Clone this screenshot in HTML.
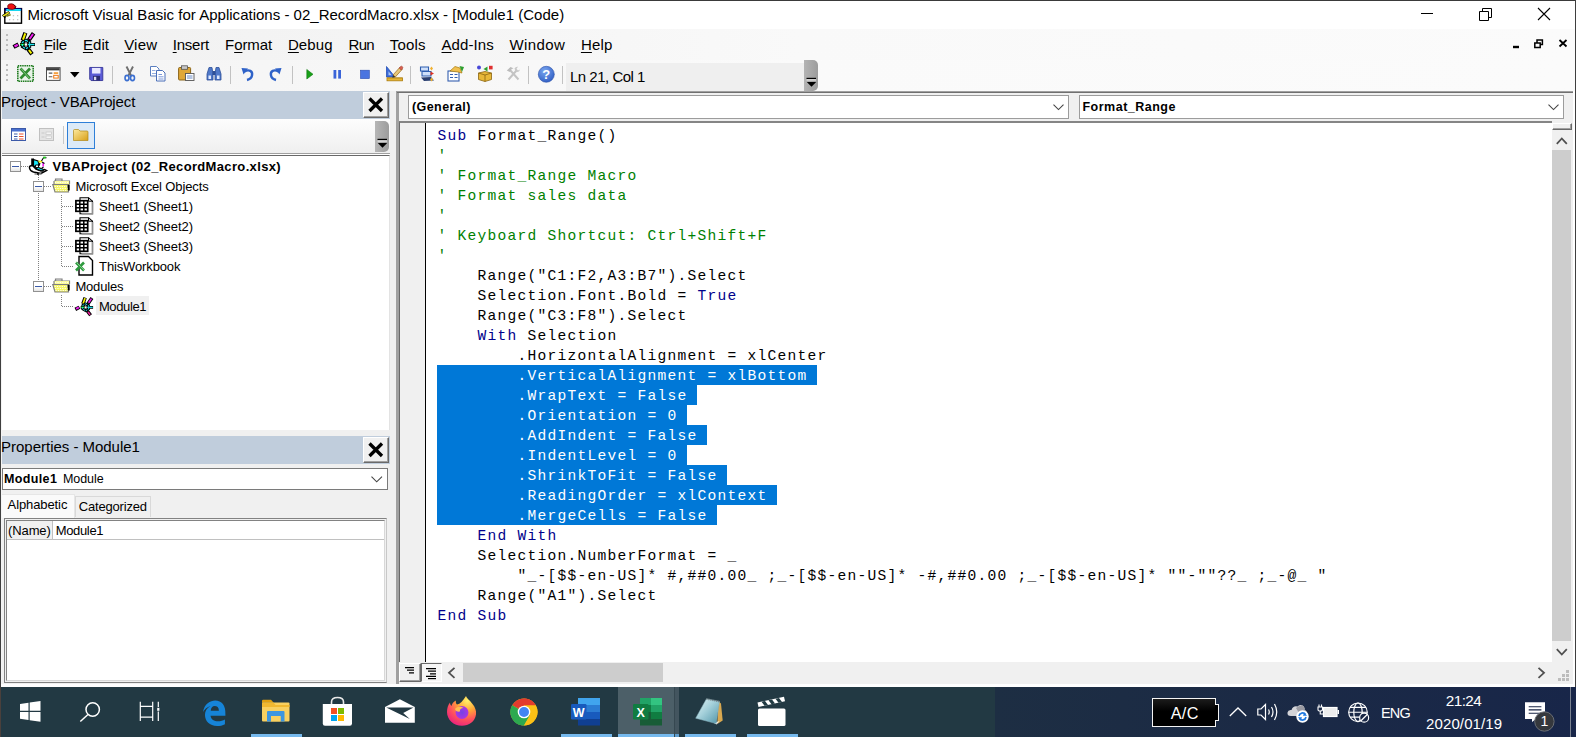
<!DOCTYPE html>
<html lang="en">
<head>
<meta charset="utf-8">
<title>Microsoft Visual Basic for Applications - 02_RecordMacro.xlsx - [Module1 (Code)]</title>
<style>
*{box-sizing:border-box;margin:0;padding:0}
html,body{width:1576px;height:737px;overflow:hidden;background:#f0f0f0;font-family:"Liberation Sans",sans-serif;color:#000}
.a{position:absolute}
.t{position:absolute;white-space:pre;line-height:1}
svg{position:absolute;overflow:visible}
u{text-decoration:underline;text-underline-offset:1.5px;text-decoration-thickness:1.2px}
#titlebar{left:0;top:0;width:1576px;height:29px;background:#fff;border-top:1px solid #3a3a3a;border-left:1px solid #3a3a3a;border-right:1px solid #3a3a3a}
#menubar{left:1px;top:29px;width:1574px;height:31px;background:linear-gradient(90deg,#eeeeee 0,#f2f2f2 160px,#f5f5f5 450px,#f9f9f9 800px,#fbfbfb 100%)}
#toolbar{left:1px;top:60px;width:1574px;height:31px;background:linear-gradient(90deg,#f4f4f4 0,#f7f7f7 400px,#fafafa 800px,#fbfbfb 100%)}
.edge{top:0;width:1px;height:687px;background:#3f3f3f}
.dots{width:2px;background-image:repeating-linear-gradient(#bcbcbc 0 2px,transparent 2px 5px)}
.sep{width:1px;height:18px;top:66px;background:#c2c2c2}
#dock{left:0;top:91px;width:392px;height:596px;background:#f0f0f0}
.phead{background:#c0cddc;left:2px;width:388px}
.xbtn{width:26px;height:26px;background:#f0f0f0;border:1px solid;border-color:#fff #6a6a6a #6a6a6a #fff;box-shadow:inset -1px -1px 0 #a0a0a0}
.white{background:#fff}
.b{font-weight:bold}
#code{font-family:"Liberation Mono",monospace;font-size:14.6px;letter-spacing:1.24px;line-height:20px;left:437.6px;top:126px;white-space:pre;color:#000}
#code .k{color:#00008b}
#code .c{color:#008000}
#code .w{color:#fff}
.sel{left:437px;height:20px;background:#0078d7}
#taskbar{left:0;top:687px;width:1576px;height:50px;background:linear-gradient(90deg,#223943 0,#223943 995px,#1d2e43 995px,#1b2a45 1250px,#182649 1576px)}
.ul{height:3px;top:734px;background:#76b9ed}
.tree{font-size:13px}
</style>
</head>
<body>
<!-- TITLE BAR -->
<div id="titlebar" class="a"></div>
<svg style="left:0;top:0" width="26" height="26" viewBox="0 0 26 26">
  <rect x="4.800" y="8.600" width="16.700" height="14.600" fill="#fff" stroke="#000" stroke-width="1.400"/>
  <rect x="4.800" y="8.200" width="16.700" height="2.600" fill="#00008c"/>
  <rect x="6.200" y="9" width="14.600" height="1.900" fill="#18e8f8"/>
  <path d="M4.800 11.500 V18" stroke="#000" stroke-width="1.400"/>
  <g fill="#c4c4c4"><rect x="12.800" y="15" width="1.300" height="1.300"/><rect x="17" y="15" width="1.300" height="1.300"/><rect x="9" y="19" width="1.300" height="1.300"/><rect x="12.800" y="19" width="1.300" height="1.300"/><rect x="17" y="19" width="1.300" height="1.300"/></g>
  <path d="M8.400 9 Q6.500 5 9.500 4 Q12 3.200 14 4.600 L15.800 6.400 L15.200 8.600 L12.500 9.400z" fill="#f01010" stroke="#500" stroke-width=".7"/>
  <path d="M13.800 5 L15.600 6.600 L14.600 8.400" fill="none" stroke="#400" stroke-width=".9"/>
  <path d="M2.300 15.300 L8.600 11.400 L9.800 13.200 L3.800 17z" fill="#f0e818" stroke="#000" stroke-width=".7"/>
  <path d="M6 15.200 L10.500 14 L10.800 15.400 L6.500 17z" fill="#808018"/>
</svg>
<span class="t" style="left:27.4px;top:7.1px;font-size:15.0px;letter-spacing:0.013px;">Microsoft Visual Basic for Applications - 02_RecordMacro.xlsx - [Module1 (Code)</span>]
<svg style="left:1415px;top:1px" width="150" height="28" viewBox="0 0 150 28" fill="none" stroke="#000" stroke-width="1">
  <path d="M6 12.5H18"/>
  <path d="M64.5 10.5h9v9h-9z M67.5 10.5v-3h9v9h-3" />
  <path d="M123 7 L135 19 M135 7 L123 19" stroke-width="1.1"/>
</svg>

<!-- MENU BAR -->
<div id="menubar" class="a"></div>
<div id="toolbar" class="a"></div>
<div class="a dots" style="left:6px;top:34px;height:19px"></div>
<svg style="left:12px;top:32px" width="24" height="23" viewBox="0 0 24 23">
<g fill="none" stroke-linecap="butt">
  <g stroke="#000" stroke-width="4.200"><path d="M13.400 .8L10.600 8.400 M21.600 1.200L17 7.900 M1.500 15L6.500 12.300 M16.300 17.200L20 22.200"/></g>
  <g stroke="#000" stroke-width="3.200"><path d="M8 12.500H23 M10.600 8L12.500 10.500 M17 7.600L15.500 10.500 M15 15L16.500 17.500"/><path d="M14 8.300 L17.600 10.400 V14.600 L14 16.700 L10.400 14.600 V10.400z"/></g>
  <path d="M13.300 1.400L11 7.600" stroke="#f4f400" stroke-width="2"/>
  <path d="M21 2L17.600 7" stroke="#f020f0" stroke-width="2"/>
  <path d="M2.500 14.500L5.800 12.700" stroke="#f020f0" stroke-width="2.400"/>
  <path d="M16.900 18L19.400 21.400" stroke="#f4f400" stroke-width="2"/>
  <path d="M8.500 12.500H12.500" stroke="#20e020" stroke-width="1.500"/>
  <path d="M16 12.500H22.500" stroke="#20e8f0" stroke-width="1.400"/>
  <path d="M14 8.300 L17.600 10.400 V14.600 L14 16.700 L10.400 14.600 V10.400z" stroke="#20e8f0" stroke-width="1.200" stroke-dasharray="2.200 1.200"/>
  <rect x="12.800" y="11.300" width="2.400" height="2.400" fill="#fff" stroke="none"/>
</g>
</svg>
<span class="t" style="left:43.7px;top:36.8px;font-size:15.0px;letter-spacing:-0.272px;"><u>F</u>ile</span>
<span class="t" style="left:82.9px;top:36.8px;font-size:15.0px;letter-spacing:0.085px;"><u>E</u>dit</span>
<span class="t" style="left:124.2px;top:36.8px;font-size:15.0px;letter-spacing:0.188px;"><u>V</u>iew</span>
<span class="t" style="left:172.7px;top:36.8px;font-size:15.0px;letter-spacing:-0.205px;"><u>I</u>nsert</span>
<span class="t" style="left:225.1px;top:36.8px;font-size:15.0px;letter-spacing:-0.103px;">F<u>o</u>rmat</span>
<span class="t" style="left:287.9px;top:36.8px;font-size:15.0px;letter-spacing:0.096px;"><u>D</u>ebug</span>
<span class="t" style="left:348.6px;top:36.8px;font-size:15.0px;letter-spacing:-0.710px;"><u>R</u>un</span>
<span class="t" style="left:389.7px;top:36.8px;font-size:15.0px;letter-spacing:0.214px;"><u>T</u>ools</span>
<span class="t" style="left:441.5px;top:36.8px;font-size:15.0px;letter-spacing:0.097px;"><u>A</u>dd-Ins</span>
<span class="t" style="left:509.5px;top:36.8px;font-size:15.0px;letter-spacing:0.388px;"><u>W</u>indow</span>
<span class="t" style="left:580.9px;top:36.8px;font-size:15.0px;letter-spacing:0.156px;"><u>H</u>elp</span>
<svg style="left:1508px;top:36px" width="64" height="16" viewBox="0 0 64 16" fill="none" stroke="#000">
  <path d="M5 11H11" stroke-width="2.4"/>
  <path d="M26.8 7h5.4v4.4h-5.4z M29 6.5v-2.5h5.4v4.4h-2" stroke-width="1.5"/>
  <path d="M51.500 4 L58.500 10.500 M58.500 4 L51.500 10.500" stroke-width="1.8"/>
</svg>

<!-- TOOLBAR -->
<div class="a dots" style="left:6px;top:64px;height:19px"></div>
<!-- excel -->
<svg style="left:17px;top:65px" width="17" height="17" viewBox="0 0 17 17">
  <rect x=".8" y=".8" width="15.400" height="15.400" fill="#e8f3e8" stroke="#1e7a1e" stroke-width="1.600" stroke-dasharray="1.500 .7"/>
  <path d="M3.500 3.500 L13 13.500 M13 3.500 L3.500 13.500" stroke="#2e8b2e" stroke-width="2.600"/>
  <path d="M4 3.500 L12.500 13.500" stroke="#8fcf8f" stroke-width=".8"/>
</svg>
<!-- userform -->
<svg style="left:46px;top:67px" width="14.500" height="14" viewBox="0 0 16 15">
  <rect x=".5" y=".5" width="15" height="14" fill="#fff" stroke="#3a3a3a"/>
  <rect x="1" y="1" width="14" height="2.500" fill="#3a3a3a"/>
  <path d="M3 6.500h4 M3 10.500h4" stroke="#555" stroke-width="1.200"/>
  <rect x="8.500" y="5.500" width="5" height="2" fill="#f5a040"/>
  <rect x="8.500" y="9" width="5" height="3" fill="none" stroke="#f08020" stroke-width="1.200"/>
</svg>

<svg style="left:70px;top:72px" width="10" height="6" viewBox="0 0 10 6"><path d="M0 0H9.500L4.750 5.500z" fill="#000"/></svg>
<!-- save -->
<svg style="left:89px;top:67px" width="14.500" height="14" viewBox="0 0 15 15">
  <path d="M.5 .5H14.500V14.500H2L.5 13z" fill="#5b5bd6" stroke="#38389a"/>
  <rect x="3" y="1" width="9" height="6" fill="#e8e8ff"/>
  <rect x="4" y="9.500" width="7.500" height="5" fill="#2a2a70"/>
  <rect x="5" y="10.500" width="2.500" height="3.500" fill="#d8d8f0"/>
</svg>
<div class="a sep" style="left:112px"></div>
<!-- cut -->
<svg style="left:124px;top:66px" width="12" height="16" viewBox="0 0 12 16">
  <path d="M2.500 .5 L7.300 10 M9 .5 L4.200 10" stroke="#707070" stroke-width="1.900" fill="none"/>
  <ellipse cx="3" cy="12" rx="2" ry="2.600" fill="none" stroke="#3b6fd0" stroke-width="1.600"/>
  <ellipse cx="8.500" cy="12" rx="2" ry="2.600" fill="none" stroke="#3b6fd0" stroke-width="1.600"/>
</svg>
<!-- copy -->
<svg style="left:150px;top:66px" width="16" height="16" viewBox="0 0 16 16">
  <path d="M.5 .5h6l2.500 2.500v7h-8.500z" fill="#fff" stroke="#5a7fc0"/>
  <path d="M2 4.500h3.500 M2 7.500h4" stroke="#7a9ad8" stroke-width=".8"/>
  <path d="M6.500 4.500h6l2.500 2.500v8h-8.500z" fill="#fff" stroke="#4a6fb8"/>
  <path d="M8.500 8.500h3.500 M8.500 10.800h5 M8.500 13h5" stroke="#5a7fd0" stroke-width=".8"/>
</svg>
<!-- paste -->
<svg style="left:178px;top:65px" width="17" height="17" viewBox="0 0 17 17">
  <rect x=".6" y="2.500" width="12" height="12.500" rx="1" fill="#e0a838" stroke="#8a6418"/>
  <rect x="3.500" y=".8" width="6" height="3.500" fill="#c8c8c8" stroke="#555" stroke-width=".8"/>
  <rect x="7.500" y="8.500" width="8.500" height="7" fill="#fff" stroke="#555" stroke-width=".9"/>
  <path d="M9 11h5.500 M9 13h5.500" stroke="#5a7fc0" stroke-width=".9"/>
</svg>
<!-- find -->
<svg style="left:206px;top:66px" width="16" height="15" viewBox="0 0 16 15">
  <path d="M1 8 L3 1.500 h3 l1 6.500 v6 h-6z M15 8 L13 1.500 h-3 l-1 6.500 v6 h6z" fill="#4f78c8" stroke="#2d4f98" stroke-width=".8"/>
  <rect x="6.500" y="5" width="3" height="4" fill="#2d4f98"/>
  <rect x="2.500" y="9.500" width="2.500" height="3.500" fill="#dfe9ff"/><rect x="11" y="9.500" width="2.500" height="3.500" fill="#dfe9ff"/>
</svg>
<div class="a sep" style="left:230px"></div>
<!-- undo / redo -->
<svg style="left:241px;top:66px" width="14" height="15" viewBox="0 0 14 15">
  <path d="M3.500 5.500 C8 3 12 5 11 9.500 C10.500 12 8 13.500 6 14" fill="none" stroke="#2f62c8" stroke-width="2.400"/>
  <path d="M.5 2 L7 2.500 L2.500 8.500z" fill="#2f62c8"/>
</svg>
<svg style="left:268px;top:66px" width="14" height="15" viewBox="0 0 14 15">
  <path d="M10.500 5.500 C6 3 2 5 3 9.500 C3.500 12 6 13.500 8 14" fill="none" stroke="#2f62c8" stroke-width="2.400"/>
  <path d="M13.500 2 L7 2.500 L11.500 8.500z" fill="#2f62c8"/>
</svg>
<div class="a sep" style="left:292px"></div>
<!-- run pause stop -->
<svg style="left:306px;top:69px" width="8" height="11" viewBox="0 0 8 11"><path d="M.8 .5V10L7 5.250z" fill="#18a018" stroke="#0d7a0d" stroke-width=".6"/></svg>
<svg style="left:333px;top:70px" width="9" height="9" viewBox="0 0 9 9"><rect x=".5" y="0" width="2.800" height="8.600" fill="#3a64d8"/><rect x="5.200" y="0" width="2.800" height="8.600" fill="#3a64d8"/></svg>
<svg style="left:360px;top:70px" width="10" height="9" viewBox="0 0 10 9"><rect x=".5" y=".2" width="8.800" height="8.400" fill="#4a74e0" stroke="#2a4cb0" stroke-width=".6"/></svg>
<!-- design mode -->
<svg style="left:385px;top:65px" width="18" height="17" viewBox="0 0 18 17">
  <path d="M1.500 12 L1.500 1.500 L10 12z" fill="#3a6ad8" stroke="#2450b8" stroke-width=".8"/>
  <path d="M3.500 10.300 L3.500 6.300 L6.800 10.300z" fill="#a8c4f4"/>
  <rect x="2" y="12.800" width="15.500" height="3" fill="#f0c040" stroke="#a87808" stroke-width=".8"/>
  <path d="M4 13v1.500 M6 13v1.500 M8 13v1.500 M10 13v1.500 M12 13v1.500 M14 13v1.500 M16 13v1.500" stroke="#a87808" stroke-width=".6"/>
  <path d="M8 10 L15 2.200 L17.300 4.200 L10.300 12z" fill="#e8c878" stroke="#a07028" stroke-width=".8"/>
  <path d="M14.200 3.100 L15.600 1.500 Q16.500 .8 17.400 1.700 Q18.200 2.600 17.500 3.500 L16.200 5z" fill="#d86050" stroke="#a03828" stroke-width=".6"/>
  <path d="M8 10 L7.300 12.800 L10.300 12z" fill="#333"/>
</svg>
<div class="a sep" style="left:410px"></div>
<!-- project explorer -->
<svg style="left:419px;top:65px" width="18" height="18" viewBox="0 0 18 18">
  <path d="M1.500 2 h8 v4 h-8z M3 6.500 h9 v4.500 h-9z" fill="#cfe0fa" stroke="#2f5fb0" stroke-width="1.100"/>
  <path d="M2 12.500 L12 12 L15 15.500 L5 16z" fill="#2a3f70"/>
  <path d="M12.500 1.500 l1.500 2 l-1.500 2 l-1.500 -2z M12.500 12.500 l1.500 2 l-1.500 2 l-1.500 -2z" fill="#f0b030"/>
  <path d="M11.500 6.500 l3.500 2 l-3.500 2z" fill="#e03020"/>
</svg>
<!-- properties -->
<svg style="left:447px;top:65px" width="18" height="17" viewBox="0 0 18 17">
  <rect x="1" y="6" width="11" height="10" fill="#fff" stroke="#3560b0" stroke-width="1.100"/>
  <path d="M3 9.500h3 M3 12.500h3 M7.500 9.500h3 M7.500 12.500h3" stroke="#3560b0" stroke-width="1.100"/>
  <path d="M3 6 L8 1.500 L13 3 L15 8 L11 7z" fill="#f0c050" stroke="#a87808" stroke-width=".7"/>
  <path d="M12.500 1 L17 2 L15 7z" fill="#30a030"/>
</svg>
<!-- object browser -->
<svg style="left:476px;top:65px" width="18" height="17" viewBox="0 0 18 17">
  <path d="M2.500 8 L9 6.500 L15.500 8 L15.500 14.500 L9 16.500 L2.500 14.500z" fill="#e8b838" stroke="#8a6410" stroke-width=".8"/>
  <path d="M2.500 8 L9 10 L15.500 8 M9 10V16.500" stroke="#8a6410" stroke-width=".8" fill="none"/>
  <circle cx="3" cy="2.500" r="2" fill="#4848d8"/>
  <path d="M7.500 4 l4 -2.500 v5z" fill="#30a030"/>
  <rect x="13" y=".8" width="3.600" height="3.600" fill="#e03030"/>
</svg>
<!-- toolbox disabled -->
<svg style="left:506px;top:66px" width="15" height="15" viewBox="0 0 15 15">
  <path d="M4 4 L12.500 13.500 M10.500 4.500 L2.500 13.500" stroke="#c4c4c4" stroke-width="2" fill="none"/>
  <path d="M.8 4.500 L4.500 1 L7.500 2.200 L5.500 3.200 L3.800 6z" fill="#bcbcbc"/>
  <path d="M8.500 2.500 Q9.500 .5 12 .8 L10.500 2.800 L12 4.500 L14 3.500 Q13.500 6 11 6 Q9 5.500 8.500 2.500z" fill="#c8c8c8"/>
</svg>
<div class="a sep" style="left:528px"></div>
<!-- help -->
<svg style="left:538px;top:66px" width="17" height="17" viewBox="0 0 17 17">
  <defs><radialGradient id="hg" cx=".4" cy=".3" r=".8"><stop offset="0" stop-color="#7aa6f0"/><stop offset="1" stop-color="#2a58c0"/></radialGradient></defs>
  <circle cx="8.300" cy="8.300" r="8" fill="url(#hg)" stroke="#2a50a8" stroke-width=".6"/>
  <text x="8.300" y="13" font-family="Liberation Sans, sans-serif" font-size="13" font-weight="bold" fill="#fff" text-anchor="middle">?</text>
</svg>
<div class="a sep" style="left:562px"></div>
<div class="a" style="left:566px;top:63px;width:238px;height:28px;background:#efefef"></div>
<div class="a" style="left:804px;top:60px;width:14px;height:31px;background:linear-gradient(90deg,#b4b4b4,#9c9c9c);border-radius:0 5px 5px 0"></div>
<svg style="left:806px;top:77px" width="11" height="11" viewBox="0 0 11 11"><path d="M.5 1.500H10" stroke="#000" stroke-width="1.400"/><path d="M.5 1.500H10" stroke="#fff" stroke-width="1" transform="translate(0,1.400)"/><path d="M.8 5H10.200L5.500 9.800z" fill="#000"/></svg>
<span class="t" style="left:570.0px;top:69.2px;font-size:15.0px;letter-spacing:-0.499px;">Ln 21, Col 1</span>

<!-- LEFT DOCK: PROJECT EXPLORER -->
<div id="dock" class="a"></div>
<div class="a" style="left:0;top:91px;width:1px;height:596px;background:#4f4f4f"></div>
<div class="a" style="left:1px;top:91px;width:1px;height:596px;background:#f4f4f4"></div>
<div class="a phead" style="top:91px;height:28px"></div>
<span class="t" style="left:1.0px;top:94.2px;font-size:15.0px;letter-spacing:-0.126px;">Project - VBAProject</span>
<div class="a xbtn" style="left:363px;top:92px"></div>
<svg style="left:368px;top:97px" width="16" height="16" viewBox="0 0 16 16"><path d="M1.500 1.500 L14 14 M14 1.500 L1.500 14" stroke="#000" stroke-width="3.300"/></svg>
<!-- project toolbar -->
<div class="a" style="left:2px;top:119px;width:388px;height:34px;background:linear-gradient(#fdfdfd,#efefef)"></div>
<svg style="left:11px;top:128px" width="16" height="14" viewBox="0 0 16 14">
  <rect x=".5" y=".5" width="14" height="12" fill="#fff" stroke="#3c5aa8"/>
  <rect x="1" y="1" width="13" height="2.500" fill="#4a70d0"/>
  <path d="M3 6h3.500 M3 8.500h3.500 M3 11h3.500" stroke="#3c5aa8" stroke-width="1"/>
  <path d="M8 6h4.500 M8 8.500h4.500 M8 11h4.500" stroke="#e85030" stroke-width="1.200"/>
</svg>
<svg style="left:39px;top:128px" width="16" height="14" viewBox="0 0 16 14">
  <rect x=".5" y=".5" width="14" height="12" fill="#e4e4e4" stroke="#c0c0c0"/>
  <rect x="7" y="4" width="5.500" height="2.500" fill="#f4f4f4" stroke="#c8c8c8" stroke-width=".7"/>
  <rect x="7" y="8" width="5.500" height="2.500" fill="#f4f4f4" stroke="#c8c8c8" stroke-width=".7"/>
  <path d="M2.500 5h3 M2.500 9h3" stroke="#c8c8c8" stroke-width="1"/>
</svg>
<div class="a" style="left:63px;top:126px;width:1px;height:18px;background:#c8c8c8"></div>
<div class="a" style="left:67px;top:122px;width:28px;height:27px;background:#dceaf8;border:1px solid #2e7fd8"></div>
<svg style="left:73px;top:129px" width="16" height="13" viewBox="0 0 16 13">
  <defs><linearGradient id="fg" x1="0" y1="0" x2="1" y2="1"><stop offset="0" stop-color="#fdeaa0"/><stop offset="1" stop-color="#d8a018"/></linearGradient></defs>
  <path d="M.5 1.500 Q.5 .5 1.500 .5 H5.500 L7 2 H14 Q15 2 15 3 V11.500 H.5z" fill="url(#fg)" stroke="#b08818" stroke-width=".7"/>
</svg>
<div class="a" style="left:375px;top:121px;width:14px;height:31px;background:linear-gradient(90deg,#b6b6b6,#9c9c9c);border-radius:0 5px 5px 0"></div>
<svg style="left:377px;top:138px" width="11" height="11" viewBox="0 0 11 11"><path d="M.5 1.500H10" stroke="#000" stroke-width="1.400"/><path d="M.5 3H10" stroke="#fff" stroke-width="1"/><path d="M.8 5H10.200L5.500 9.800z" fill="#000"/></svg>
<!-- tree box -->
<div class="a" style="left:2px;top:153px;width:388px;height:1px;background:#a0a0a0"></div>
<div class="a" style="left:2px;top:154px;width:388px;height:1px;background:#fff"></div>
<div class="a white" style="left:2px;top:155px;width:388px;height:275px;border-top:1px solid #696969;border-right:1px solid #e3e3e3"></div>
<!-- dotted connector lines -->
<svg style="left:0;top:156px" width="200" height="170" viewBox="0 0 200 170" shape-rendering="crispEdges" stroke="#808080" stroke-width="1" stroke-dasharray="1 1" fill="none">
  <path d="M21 10.500H28 M38.500 19V130 M44 30.500H52 M44 130.500H52 M61.500 39V110 M61.500 50.500H74 M61.500 70.500H74 M61.500 90.500H74 M61.500 110.500H74 M61.500 139V150 M61.500 150.500H74"/>
</svg>
<!-- expander boxes -->
<div class="a" style="left:10px;top:161px;width:11px;height:11px;border:1px solid #919191;background:linear-gradient(#fff 50%,#e4e4e4)"></div>
<div class="a" style="left:12px;top:166px;width:7px;height:1px;background:#3a5aa8"></div>
<div class="a" style="left:33px;top:181px;width:11px;height:11px;border:1px solid #919191;background:linear-gradient(#fff 50%,#e4e4e4)"></div>
<div class="a" style="left:35px;top:186px;width:7px;height:1px;background:#3a5aa8"></div>
<div class="a" style="left:33px;top:281px;width:11px;height:11px;border:1px solid #919191;background:linear-gradient(#fff 50%,#e4e4e4)"></div>
<div class="a" style="left:35px;top:286px;width:7px;height:1px;background:#3a5aa8"></div>
<!-- project icon -->
<svg style="left:28px;top:156px" width="20" height="19" viewBox="0 0 20 19">
  <path d="M1.500 12 q-.5 -2.500 3 -2.500 L8 13 l5 2 l3.500 -1.500 l2 1 l-5.500 3 l-7.500 -1.500 q-3.500 -1 -4 -4z" fill="#fff" stroke="#000" stroke-width="1.500"/>
  <path d="M3.200 2.500 h2.800 v7.500 h-2.800z" fill="#000"/>
  <path d="M5.500 3.500 l4.500 1.500 l1 3 l-1.500 3 l3.500 1.500 l2.500 1 l-1 1.500 l-5 -1.500 l-4 -4z" fill="#18e8f8" stroke="#000" stroke-width="1.200"/>
  <path d="M7.500 9 h3 v2.500 h-3z" fill="#fff" stroke="#000" stroke-width=".9"/>
  <path d="M10.500 5.500 h3.500" stroke="#f0f000" stroke-width="1.800"/>
  <path d="M15.200 7 v3.500" stroke="#f020f0" stroke-width="1.700"/>
  <path d="M13.500 5 L15.500 1.800 h3 M14 6 l2.500 1.500 M12 7 l-1 3 M15.500 11 l-2 1.500" stroke="#000" stroke-width="1.100" fill="none"/>
  <rect x="15.200" y=".6" width="2.600" height="1.800" fill="#20d020"/>
  <rect x="6.500" y="17.200" width="7" height="1.500" fill="#808080"/><rect x="9" y="17.200" width="2" height="1.500" fill="#000"/>
</svg>
<!-- folder icons -->
<svg style="left:52px;top:178px" width="19" height="15" viewBox="0 0 19 15">
  <path d="M3.500 3 V1 H10 V3" fill="#e8e8e8" stroke="#808080" stroke-width="1.200"/>
  <path d="M2 3 H17.500 V6" fill="none" stroke="#808080" stroke-width="1.200"/>
  <path d="M2 3 H17 V7 H2z" fill="#fbfb9a"/>
  <path d="M.8 6.500 H15.500 L16.500 14 H3z" fill="#f6f664" stroke="#808080" stroke-width="1.200"/>
  <path d="M3 4.500h13 M2.500 8.500h12.500 M3 10.500h12.500 M3.500 12.500h12.500" stroke="#fff" stroke-width=".9" stroke-dasharray="1.200 1.200"/>
  <path d="M16.800 6.500 V12.500" stroke="#000" stroke-width="1.800"/>
  <path d="M2 3 V6.500" stroke="#808080" stroke-width="1.200"/>
</svg>
<svg style="left:52px;top:278px" width="19" height="15" viewBox="0 0 19 15">
  <path d="M3.500 3 V1 H10 V3" fill="#e8e8e8" stroke="#808080" stroke-width="1.200"/>
  <path d="M2 3 H17.500 V6" fill="none" stroke="#808080" stroke-width="1.200"/>
  <path d="M2 3 H17 V7 H2z" fill="#fbfb9a"/>
  <path d="M.8 6.500 H15.500 L16.500 14 H3z" fill="#f6f664" stroke="#808080" stroke-width="1.200"/>
  <path d="M3 4.500h13 M2.500 8.500h12.500 M3 10.500h12.500 M3.500 12.500h12.500" stroke="#fff" stroke-width=".9" stroke-dasharray="1.200 1.200"/>
  <path d="M16.800 6.500 V12.500" stroke="#000" stroke-width="1.800"/>
  <path d="M2 3 V6.500" stroke="#808080" stroke-width="1.200"/>
</svg>
<!-- sheet icons -->
<svg style="left:75px;top:197px" width="19" height="18" viewBox="0 0 19 18">
  <path d="M5 .7 h8.500 l4 3.500 v12.500 h-12.500z" fill="#fff" stroke="#000" stroke-width="1.100"/>
  <path d="M13.500 .7 v3.500 h4" fill="none" stroke="#000" stroke-width="1"/>
  <path d="M17.500 5 v11.700 h-11" fill="none" stroke="#909090" stroke-width="1.600"/>
  <rect x=".9" y="3.700" width="11.800" height="10.600" fill="#fff" stroke="#000" stroke-width="1.700"/>
  <path d="M1 7.200h11.800 M1 10.700h11.800 M4.800 3.700v10.600 M8.800 3.700v10.600" stroke="#000" stroke-width="1.500"/>
</svg>
<svg style="left:75px;top:217px" width="19" height="18" viewBox="0 0 19 18">
  <path d="M5 .7 h8.500 l4 3.500 v12.500 h-12.500z" fill="#fff" stroke="#000" stroke-width="1.100"/>
  <path d="M13.500 .7 v3.500 h4" fill="none" stroke="#000" stroke-width="1"/>
  <path d="M17.500 5 v11.700 h-11" fill="none" stroke="#909090" stroke-width="1.600"/>
  <rect x=".9" y="3.700" width="11.800" height="10.600" fill="#fff" stroke="#000" stroke-width="1.700"/>
  <path d="M1 7.200h11.800 M1 10.700h11.800 M4.800 3.700v10.600 M8.800 3.700v10.600" stroke="#000" stroke-width="1.500"/>
</svg>
<svg style="left:75px;top:237px" width="19" height="18" viewBox="0 0 19 18">
  <path d="M5 .7 h8.500 l4 3.500 v12.500 h-12.500z" fill="#fff" stroke="#000" stroke-width="1.100"/>
  <path d="M13.500 .7 v3.500 h4" fill="none" stroke="#000" stroke-width="1"/>
  <path d="M17.500 5 v11.700 h-11" fill="none" stroke="#909090" stroke-width="1.600"/>
  <rect x=".9" y="3.700" width="11.800" height="10.600" fill="#fff" stroke="#000" stroke-width="1.700"/>
  <path d="M1 7.200h11.800 M1 10.700h11.800 M4.800 3.700v10.600 M8.800 3.700v10.600" stroke="#000" stroke-width="1.500"/>
</svg>
<!-- thisworkbook icon -->
<svg style="left:75px;top:258px" width="18" height="17" viewBox="0 0 18 17">
  <path d="M4 -1.500 h9.500 l4 4 v14.500 h-13.500z" fill="#fff" stroke="#000" stroke-width="1.400"/>
  <path d="M1 4.500 L9 12.500 M9 4.500 L1 12.500" stroke="#2e9a3e" stroke-width="2.600"/>
  <path d="M1.500 4.500 L9 12" stroke="#a0e0a8" stroke-width=".7"/>
</svg>
<!-- module icon -->
<svg style="left:74px;top:297px" width="20" height="19" viewBox="0 0 24 23">
<g fill="none" stroke-linecap="butt">
  <g stroke="#000" stroke-width="4.200"><path d="M13.400 .8L10.600 8.400 M21.600 1.200L17 7.900 M1.500 15L6.500 12.300 M16.300 17.200L20 22.200"/></g>
  <g stroke="#000" stroke-width="3.200"><path d="M8 12.500H23 M10.600 8L12.500 10.500 M17 7.600L15.500 10.500 M15 15L16.500 17.500"/><path d="M14 8.300 L17.600 10.400 V14.600 L14 16.700 L10.400 14.600 V10.400z"/></g>
  <path d="M13.300 1.400L11 7.600" stroke="#f4f400" stroke-width="2"/>
  <path d="M21 2L17.600 7" stroke="#f020f0" stroke-width="2"/>
  <path d="M2.500 14.500L5.800 12.700" stroke="#f020f0" stroke-width="2.400"/>
  <path d="M16.900 18L19.400 21.400" stroke="#f020a0" stroke-width="2"/>
  <path d="M8.500 12.500H12.500" stroke="#20e020" stroke-width="1.500"/>
  <path d="M16 12.500H22.500" stroke="#20e8f0" stroke-width="1.400"/>
  <path d="M14 8.300 L17.600 10.400 V14.600 L14 16.700 L10.400 14.600 V10.400z" stroke="#20e8f0" stroke-width="1.200" stroke-dasharray="2.200 1.200"/>
  <rect x="12.800" y="11.300" width="2.400" height="2.400" fill="#fff" stroke="none"/>
</g>
</svg>
<!-- tree labels -->
<span class="t" style="left:52.4px;top:159.6px;font-size:13.0px;letter-spacing:0.347px;font-weight:bold">VBAProject (02_RecordMacro.xlsx)</span>
<span class="t" style="left:75.6px;top:179.5px;font-size:13.0px;letter-spacing:-0.123px;">Microsoft Excel Objects</span>
<span class="t" style="left:99.1px;top:199.5px;font-size:13.0px;letter-spacing:-0.052px;">Sheet1 (Sheet1)</span>
<span class="t" style="left:99.1px;top:219.5px;font-size:13.0px;letter-spacing:-0.052px;">Sheet2 (Sheet2)</span>
<span class="t" style="left:99.1px;top:239.5px;font-size:13.0px;letter-spacing:-0.052px;">Sheet3 (Sheet3)</span>
<span class="t" style="left:99.1px;top:259.5px;font-size:13.0px;letter-spacing:-0.137px;">ThisWorkbook</span>
<span class="t" style="left:75.4px;top:279.5px;font-size:13.0px;letter-spacing:-0.177px;">Modules</span>
<div class="a" style="left:96px;top:296px;width:53px;height:19px;background:#f0f0f0"></div>
<span class="t" style="left:98.9px;top:299.5px;font-size:13.0px;letter-spacing:-0.382px;">Module1</span>

<!-- PROPERTIES -->
<div class="a phead" style="top:436px;height:28px"></div>
<span class="t" style="left:1.1px;top:439.2px;font-size:15.0px;letter-spacing:-0.022px;">Properties - Module1</span>
<div class="a xbtn" style="left:363px;top:437px"></div>
<svg style="left:368px;top:442px" width="16" height="16" viewBox="0 0 16 16"><path d="M1.500 1.500 L14 14 M14 1.500 L1.500 14" stroke="#000" stroke-width="3.300"/></svg>
<div class="a white" style="left:2px;top:468px;width:386px;height:22px;border:1px solid #7a7a7a"></div>
<span class="t" style="left:4.1px;top:473.0px;font-size:12.5px;letter-spacing:0.342px;font-weight:bold">Module1</span>
<span class="t" style="left:63.0px;top:473.0px;font-size:12.5px;letter-spacing:-0.067px;">Module</span>
<svg style="left:371px;top:476px" width="12" height="7" viewBox="0 0 12 7"><path d="M.5 .7 L5.700 5.800 L11 .7" fill="none" stroke="#444" stroke-width="1.100"/></svg>
<!-- tabs -->
<div class="a" style="left:75px;top:496px;width:76px;height:21px;background:#f0f0f0;border:1px solid #d9d9d9;border-bottom:none"></div>
<div class="a" style="left:2px;top:494px;width:73px;height:24px;background:#fafafa;border:1px solid #e6e6e6;border-bottom:none;border-left:none"></div>
<span class="t" style="left:7.6px;top:497.9px;font-size:13.0px;letter-spacing:-0.102px;">Alphabetic</span>
<span class="t" style="left:78.8px;top:499.8px;font-size:13.0px;letter-spacing:-0.192px;">Categorized</span>
<!-- grid -->
<div class="a" style="left:4px;top:518px;width:383px;height:165px;border:1px solid #828282;border-right-color:#c8c8c8;background:#f0f0f0"></div>
<div class="a white" style="left:6px;top:520px;width:379px;height:161px;border:1px solid #828282;border-right-color:#d8d8d8;border-bottom-color:#d8d8d8"></div>
<div class="a" style="left:7px;top:521px;width:46px;height:18px;background:#f0f0f0;border-right:1px solid #c0c0c0"></div>
<div class="a" style="left:7px;top:539px;width:377px;height:1px;background:#c0c0c0"></div>
<span class="t" style="left:8.0px;top:524.3px;font-size:13.0px;letter-spacing:-0.107px;">(Name)</span>
<span class="t" style="left:55.7px;top:524.3px;font-size:13.0px;letter-spacing:-0.339px;">Module1</span>

<!-- CODE WINDOW -->
<div class="a" style="left:392px;top:91px;width:5px;height:596px;background:#f0f0f0"></div>
<div class="a" style="left:396px;top:91px;width:1180px;height:593px;background:#f0f0f0;border-left:3px solid #a0a0a0;border-top:2px solid #a0a0a0;border-right:1px solid #a0a0a0"></div>
<div class="a" style="left:397px;top:92px;width:1176px;height:1px;background:#707070"></div>
<div class="a" style="left:1px;top:684px;width:1574px;height:3px;background:#fff"></div>
<div class="a" style="left:1573px;top:91px;width:2px;height:596px;background:#fff"></div>
<!-- combos -->
<div class="a white" style="left:408px;top:95px;width:661px;height:24px;border:1px solid #9c9c9c"></div>
<div class="a white" style="left:1079px;top:95px;width:485px;height:24px;border:1px solid #9c9c9c"></div>
<span class="t" style="left:411.9px;top:101.2px;font-size:12.5px;letter-spacing:0.457px;font-weight:bold">(General)</span>
<span class="t" style="left:1082.5px;top:101.2px;font-size:12.5px;letter-spacing:0.489px;font-weight:bold">Format_Range</span>
<svg style="left:1053px;top:104px" width="12" height="7" viewBox="0 0 12 7"><path d="M.5 .7 L5.500 5.600 L10.500 .7" fill="none" stroke="#444" stroke-width="1.100"/></svg>
<svg style="left:1548px;top:104px" width="12" height="7" viewBox="0 0 12 7"><path d="M.5 .7 L5.500 5.600 L10.500 .7" fill="none" stroke="#444" stroke-width="1.100"/></svg>
<!-- edit area -->
<div class="a white" style="left:399px;top:121px;width:1153px;height:541px;border-top:2px solid #858585;border-left:1px solid #696969"></div>
<div class="a" style="left:400px;top:123px;width:26px;height:539px;background:#f0f0f0;border-right:1px solid #000"></div>
<div class="a sel" style="top:365px;width:380px"></div>
<div class="a sel" style="top:385px;width:260px"></div>
<div class="a sel" style="top:405px;width:250px"></div>
<div class="a sel" style="top:425px;width:270px"></div>
<div class="a sel" style="top:445px;width:250px"></div>
<div class="a sel" style="top:465px;width:290px"></div>
<div class="a sel" style="top:485px;width:340px"></div>
<div class="a sel" style="top:505px;width:280px"></div>
<div id="code" class="a"><span class="k">Sub</span> Format_Range()
<span class="c">'</span>
<span class="c">' Format_Range Macro</span>
<span class="c">' Format sales data</span>
<span class="c">'</span>
<span class="c">' Keyboard Shortcut: Ctrl+Shift+F</span>
<span class="c">'</span>
    Range("C1:F2,A3:B7").Select
    Selection.Font.Bold = <span class="k">True</span>
    Range("C3:F8").Select
    <span class="k">With</span> Selection
        .HorizontalAlignment = xlCenter
<span class="w">        .VerticalAlignment = xlBottom </span>
<span class="w">        .WrapText = False </span>
<span class="w">        .Orientation = 0 </span>
<span class="w">        .AddIndent = False </span>
<span class="w">        .IndentLevel = 0 </span>
<span class="w">        .ShrinkToFit = False </span>
<span class="w">        .ReadingOrder = xlContext </span>
<span class="w">        .MergeCells = False </span>
    <span class="k">End With</span>
    Selection.NumberFormat = _
        "_-[$$-en-US]* #,##0.00_ ;_-[$$-en-US]* -#,##0.00 ;_-[$$-en-US]* ""-""??_ ;_-@_ "
    Range("A1").Select
<span class="k">End Sub</span></div>
<!-- vertical scrollbar -->
<div class="a" style="left:1552px;top:123px;width:21px;height:539px;background:#f0f0f0"></div>
<div class="a" style="left:1552px;top:123px;width:20px;height:7px;background:#f0f0f0;border:1px solid;border-color:#fff #696969 #696969 #fff;box-shadow:inset -1px -1px 0 #a0a0a0"></div>
<svg style="left:1556px;top:137px" width="12" height="8" viewBox="0 0 12 8"><path d="M.8 6.800 L5.800 1.500 L10.800 6.800" fill="none" stroke="#505050" stroke-width="1.800"/></svg>
<div class="a" style="left:1552px;top:150px;width:19px;height:491px;background:#cdcdcd"></div>
<svg style="left:1556px;top:648px" width="12" height="8" viewBox="0 0 12 8"><path d="M.8 1.200 L5.800 6.500 L10.800 1.200" fill="none" stroke="#505050" stroke-width="1.800"/></svg>
<!-- bottom bar -->
<div class="a" style="left:399px;top:662px;width:1174px;height:21px;background:#f0f0f0"></div>
<div class="a" style="left:399px;top:663px;width:22px;height:19px;background:#f0f0f0;border:1px solid;border-color:#fff #696969 #696969 #fff;box-shadow:inset -1px -1px 0 #a0a0a0"></div>
<div class="a" style="left:421px;top:663px;width:21px;height:19px;background:#f6f6f6;border:1px solid;border-color:#696969 #fff #fff #696969"></div>
<svg style="left:404px;top:666px" width="12" height="10" viewBox="0 0 12 10" stroke="#000" stroke-width="1.200"><path d="M1 1.600H10 M3 4.200H10 M5 6.800H10"/></svg>
<svg style="left:425px;top:667px" width="12" height="12" viewBox="0 0 12 12" stroke="#000" stroke-width="1.200"><path d="M1 1.600H11 M3 4.200H11 M5 6.800H11 M1 9.400H11"/><path d="M3 11.600H11"/></svg>
<svg style="left:447px;top:667px" width="9" height="12" viewBox="0 0 9 12"><path d="M7.500 .8 L2 5.800 L7.500 10.800" fill="none" stroke="#505050" stroke-width="1.800"/></svg>
<div class="a" style="left:463px;top:663px;width:200px;height:19px;background:#cdcdcd"></div>
<svg style="left:1537px;top:667px" width="9" height="12" viewBox="0 0 9 12"><path d="M1.500 .8 L7 5.800 L1.500 10.800" fill="none" stroke="#505050" stroke-width="1.800"/></svg>
<svg style="left:1558px;top:670px" width="12" height="12" viewBox="0 0 12 12" fill="#bcbcbc" shape-rendering="crispEdges"><rect x="8" y="0" width="3" height="3"/><rect x="4" y="4" width="3" height="3"/><rect x="8" y="4" width="3" height="3"/><rect x="0" y="8" width="3" height="3"/><rect x="4" y="8" width="3" height="3"/><rect x="8" y="8" width="3" height="3"/></svg>

<!-- TASKBAR -->
<div id="taskbar" class="a"></div>
<div class="a" style="left:0;top:687px;width:1px;height:50px;background:#4a403c"></div>
<!-- start -->
<svg style="left:20px;top:701px" width="21" height="21" viewBox="0 0 21 21" fill="#fff">
  <path d="M0 3 L8.500 1.800 V9.800 H0z M9.700 1.600 L20.500 0 V9.800 H9.700z M0 11 H8.500 V19 L0 17.800z M9.700 11 H20.500 V20.800 L9.700 19.200z"/>
</svg>
<!-- search -->
<svg style="left:79px;top:701px" width="24" height="22" viewBox="0 0 24 22" fill="none" stroke="#fff" stroke-width="1.500">
  <circle cx="13.700" cy="8.500" r="6.700"/><path d="M9 13.500 L1.300 20.500"/>
</svg>
<!-- task view -->
<svg style="left:139px;top:701px" width="22" height="21" viewBox="0 0 22 21" fill="none" stroke="#fff" stroke-width="1.200">
  <path d="M1.300 .8V20 M13.700 .8V20 M1.300 5.300H13.700 M1.300 16.200H13.700"/>
  <path d="M19.300 .8V6 M19.300 10.500V20"/><rect x="18.200" y="6.800" width="2.200" height="3" fill="#fff" stroke="none"/>
</svg>
<!-- edge -->
<svg style="left:201.500px;top:699.500px" width="24.500" height="26" viewBox="0 0 26 28">
  <path d="M1 13 C2 4 9 .5 14 .5 C21 .5 25.500 6 25 15 L25 17 H9 C9.500 21 13 23 17 23 C20 23 22.500 22 24.500 21 V26 C22 27.300 19 28 16 28 C8 28 3 23 3 16 C3 12 5 8.500 9 6.500 C5.500 7.500 2.500 10 1 13z M9.200 11.500 H18 C18 8 16 6.500 13.500 6.500 C11 6.500 9.500 8.500 9.200 11.500z" fill="#1684d8" fill-rule="evenodd"/>
</svg>
<!-- explorer -->
<svg style="left:261px;top:699px" width="30" height="24" viewBox="0 0 30 24">
  <path d="M1 2 Q1 .8 2.200 .8 H10 L12.500 3.500 H1z" fill="#e0a010"/>
  <rect x="1" y="3.500" width="27.500" height="19" rx="1" fill="#f8d060"/>
  <path d="M1 3.500 H12.500 L14.500 6 H28.500 V8 H1z" fill="#f0b830"/>
  <path d="M6 22.500 V13 Q6 12 7 12 H22.500 Q23.500 12 23.500 13 V22.500 H19.500 V17 H10 V22.500z" fill="#3d96e0"/>
  <rect x="10" y="17" width="9.500" height="5.500" fill="#f8d060"/>
</svg>
<div class="a ul" style="left:251px;width:51px"></div>
<!-- store -->
<svg style="left:322px;top:696px" width="31" height="31" viewBox="0 0 31 31">
  <path d="M9.500 9 V6 Q9.500 1.500 15.500 1.500 Q21.500 1.500 21.500 6 V9" fill="none" stroke="#e8e8e8" stroke-width="1.600"/>
  <path d="M.8 8 H30 V27.500 Q30 29.800 27.800 29.800 H3 Q.8 29.800 .8 27.500z" fill="#fff"/>
  <rect x="9" y="12" width="6" height="6" fill="#f25022"/><rect x="16" y="12" width="6" height="6" fill="#7fba00"/>
  <rect x="9" y="19" width="6" height="6" fill="#00a4ef"/><rect x="16" y="19" width="6" height="6" fill="#ffb900"/>
</svg>
<!-- mail -->
<svg style="left:384px;top:698px" width="32" height="26" viewBox="0 0 32 26">
  <path d="M1 9 L15.900 1.200 L30.800 9 V24.700 H1z" fill="#fff"/>
  <path d="M2.200 9.600 H29.600 L19.200 15.100 L25.800 20.900z" fill="#223943"/>
</svg>
<!-- firefox -->
<svg style="left:446px;top:696px" width="31" height="30" viewBox="0 0 31 30">
  <defs>
   <radialGradient id="ff1" cx=".7" cy=".15" r="1"><stop offset="0" stop-color="#fff36b"/><stop offset=".35" stop-color="#ffa436"/><stop offset=".65" stop-color="#ff4f5e"/><stop offset="1" stop-color="#e31587"/></radialGradient>
   <radialGradient id="ff2" cx=".5" cy=".5" r=".6"><stop offset="0" stop-color="#7542e5"/><stop offset="1" stop-color="#b833e1"/></radialGradient>
  </defs>
  <path d="M20 0 C21 3 24 4 26.500 8 C29 11 30.500 14.500 30 18.500 C29 25.500 23 29.800 16 29.800 C7.500 29.800 1 23.500 1 16 C1 12 2 9 4 6.500 C4 8 4.500 9 5.500 10 C6 7.500 7.500 5.500 10 4.500 C9.500 6 10 7.500 11 8.500 C14 8 17 5 20 0z" fill="url(#ff1)"/>
  <circle cx="16" cy="16.500" r="6.500" fill="url(#ff2)"/>
  <path d="M9 13 C11 10.500 15 10 17.500 12 C15 12 13.500 13.500 14 15.500 C11.500 16 9.500 15 9 13z" fill="#ffbd4f"/>
</svg>
<!-- chrome -->
<svg style="left:510px;top:698px" width="28" height="28" viewBox="0 0 28 28">
  <circle cx="14" cy="14" r="13.500" fill="#fbc116"/>
  <path d="M14 14 L2.300 7.250 A13.500 13.500 0 0 1 25.700 7.250z" fill="#e33b2e"/>
  <path d="M14 .5 A13.500 13.500 0 0 1 25.700 7.250 L14 7.250z" fill="#e33b2e"/>
  <path d="M2.300 7.250 A13.500 13.500 0 0 0 14 27.500 L19.800 17.400 L14 14z" fill="#2da94f"/>
  <path d="M2.300 7.250 L8.200 17.400 L14 27.500 A13.500 13.500 0 0 1 2.300 7.250z" fill="#2da94f"/>
  <path d="M25.700 7.250 H14 L19.800 17.400 L14 27.500 A13.500 13.500 0 0 0 25.700 7.250z" fill="#fbc116"/>
  <circle cx="14" cy="14" r="6.300" fill="#fff"/><circle cx="14" cy="14" r="5" fill="#4285f4"/>
</svg>
<!-- word -->
<svg style="left:570px;top:698px" width="31" height="28" viewBox="0 0 31 28">
  <rect x="8" y="0" width="22" height="7" fill="#41a5ee"/><rect x="8" y="7" width="22" height="7" fill="#2b7cd3"/>
  <rect x="8" y="14" width="22" height="7" fill="#185abd"/><rect x="8" y="21" width="22" height="6.500" fill="#103f91"/>
  <rect x="1" y="6" width="15.500" height="15.500" rx="1.200" fill="#185abd"/>
  <text x="8.700" y="18.500" font-family="Liberation Sans, sans-serif" font-weight="bold" font-size="12.500" fill="#fff" text-anchor="middle">W</text>
</svg>
<div class="a ul" style="left:561px;width:51px"></div>
<!-- excel active -->
<div class="a" style="left:618px;top:687px;width:56px;height:50px;background:#4c5f68"></div>
<div class="a" style="left:674px;top:687px;width:5px;height:50px;background:#43555f;border-left:1px solid #364851"></div>
<svg style="left:632px;top:698px" width="31" height="28" viewBox="0 0 31 28">
  <rect x="8" y="0" width="11" height="7" fill="#21a366"/><rect x="19" y="0" width="11" height="7" fill="#33c481"/>
  <rect x="8" y="7" width="11" height="7" fill="#107c41"/><rect x="19" y="7" width="11" height="7" fill="#21a366"/>
  <rect x="8" y="14" width="11" height="7" fill="#185c37"/><rect x="19" y="14" width="11" height="7" fill="#107c41"/>
  <rect x="8" y="21" width="22" height="6.500" fill="#185c37"/>
  <rect x="1" y="6" width="15.500" height="15.500" rx="1.200" fill="#107c41"/>
  <text x="8.700" y="18.500" font-family="Liberation Sans, sans-serif" font-weight="bold" font-size="12.500" fill="#fff" text-anchor="middle">X</text>
</svg>
<div class="a ul" style="left:618px;width:56px"></div>
<div class="a ul" style="left:675px;width:4px;background:#5f9ccc"></div>
<!-- notepad-like -->
<svg style="left:694px;top:697px" width="30" height="30" viewBox="0 0 30 30">
  <defs><linearGradient id="np" x1="0" y1="0" x2="1" y2="1"><stop offset="0" stop-color="#e4f4f6"/><stop offset=".45" stop-color="#a4d0da"/><stop offset="1" stop-color="#4f94a8"/></linearGradient></defs>
  <path d="M24.500 4.500 L27 6.500 L28.700 23.400 L23.300 27z" fill="#d8a850"/>
  <path d="M20 26 L25.500 24 L22.500 27.500z" fill="#f0f0f0"/>
  <path d="M12.500 1.800 L25.500 4.400 L22.200 26.600 L1.700 21.200z" fill="url(#np)" stroke="#8ab4c0" stroke-width=".5"/>
  <path d="M12.500 2 L25.500 4.600" stroke="#70787c" stroke-width="1.600" stroke-dasharray="1 1"/>
</svg>
<div class="a ul" style="left:685px;width:51px"></div>
<!-- clapper -->
<svg style="left:757px;top:696px" width="30" height="31" viewBox="0 0 30 31">
  <rect x="1" y="12.500" width="27.500" height="17.500" rx="1.500" fill="#fff"/>
  <path d="M.5 6.500 L27 .8 L28 5.200 L1.500 11z" fill="#fff"/>
  <path d="M4.500 5.700 L7.500 9.700 L11 9 L8 5z M11.500 4.200 L14.500 8.200 L18 7.400 L15 3.400z M18.500 2.700 L21.500 6.700 L25 5.900 L22 1.900z" fill="#203a42"/>
</svg>
<div class="a ul" style="left:747px;width:51px"></div>

<!-- TRAY -->
<div class="a" style="left:1152px;top:698px;width:64px;height:29px;background:linear-gradient(#1c1c1c,#000 45%);border:1px solid #f4f4f4"></div>
<div class="a" style="left:1215px;top:704px;width:4px;height:17px;background:#000;border:1px solid #f4f4f4;border-left:none"></div>
<span class="t" style="left:1170.7px;top:705.3px;font-size:16.2px;letter-spacing:0.367px;color:#fff">A/C</span>
<svg style="left:1229px;top:707px" width="18" height="10" viewBox="0 0 18 10"><path d="M.8 9 L9 1 L17.200 9" fill="none" stroke="#fff" stroke-width="1.300"/></svg>
<!-- speaker -->
<svg style="left:1257px;top:702px" width="22" height="20" viewBox="0 0 22 20" fill="none" stroke="#fff" stroke-width="1.200">
  <path d="M.8 7 H4 L8.500 2.500 V17.500 L4 13 H.8z"/>
  <path d="M11.500 7.500 Q13 10 11.500 12.500 M14.500 5 Q17.500 10 14.500 15 M17.500 2 Q22 10 17.500 18"/>
</svg>
<!-- cloud sync -->
<svg style="left:1287px;top:704px" width="23" height="19" viewBox="0 0 23 19">
  <path d="M4 12 Q0 12 .5 8.500 Q1 5.500 4.500 6 Q6 1.500 10.500 2.500 Q12.500 0 15.500 1.500 Q18 3 17.500 6 Q20 6.500 19.500 9.500 Q19 12 16 12z" fill="#d4d4d8"/>
  <path d="M9 4 Q12 1 15.500 1.500 Q18 3 17.500 6 Q20 6.500 19.500 9 L12 9z" fill="#9a9aa2"/>
  <circle cx="15.500" cy="12.500" r="6.200" fill="#fff"/>
  <path d="M12 12 A3.600 3.600 0 0 1 18.500 10.500 M19 13 A3.600 3.600 0 0 1 12.500 14.500" fill="none" stroke="#1e78e0" stroke-width="1.700"/>
  <path d="M17.200 8.600 L20 11.800 L16 11.800z M13.800 16.400 L11 13.200 L15 13.200z" fill="#1e78e0"/>
</svg>
<!-- battery plug -->
<svg style="left:1317px;top:704px" width="22" height="15" viewBox="0 0 22 15">
  <rect x="6.500" y="3.500" width="13.500" height="9" fill="#ececec" stroke="#fff" stroke-width="1.200"/>
  <rect x="20.500" y="6" width="1.500" height="4" fill="#fff"/>
  <path d="M2 0.500 V3 M4.500 .5 V3 M1 3 H5.500 V5.500 Q5.500 7 3.250 7 Q1 7 1 5.500z M3.250 7 V10 H6" fill="none" stroke="#fff" stroke-width="1.100"/>
</svg>
<!-- globe -->
<svg style="left:1347.500px;top:702px" width="22.500" height="21.500" viewBox="0 0 23 22" fill="none" stroke="#fff" stroke-width="1.200">
  <circle cx="10.200" cy="10.500" r="9.500"/><ellipse cx="10.200" cy="10.500" rx="4.300" ry="9.500"/>
  <path d="M.7 10.500 H19.700 M2 5.500 H18.400 M2 15.500 H12"/>
  <circle cx="16.500" cy="16" r="4.600" fill="#1a2846"/><path d="M13.300 19.200 L19.700 12.800"/>
</svg>
<span class="t" style="left:1381.0px;top:705.5px;font-size:14.5px;letter-spacing:-0.841px;color:#fff">ENG</span>
<span class="t" style="left:1445.8px;top:693.2px;font-size:15.3px;letter-spacing:-0.576px;color:#fff">21:24</span>
<span class="t" style="left:1426.1px;top:715.5px;font-size:15.0px;letter-spacing:0.102px;color:#fff">2020/01/19</span>
<!-- notification -->
<svg style="left:1524px;top:701px" width="32" height="32" viewBox="0 0 32 32">
  <path d="M1 1.200 H21 V18 H12 L8 21 V18 H1z" fill="#fff"/>
  <path d="M4.700 5.800H17.400 M4.700 8.900H17.400 M4.700 12.300H17.400" stroke="#1a2646" stroke-width="1.100"/>
  <circle cx="20.400" cy="20.500" r="9.700" fill="#35383d" stroke="#6a6e74" stroke-width="1"/>
  <text x="20.400" y="25.400" font-family="Liberation Sans, sans-serif" font-size="14" fill="#fff" text-anchor="middle">1</text>
</svg>
<div class="a" style="left:1570px;top:687px;width:1px;height:50px;background:#7a8290"></div>

<div class="a edge" style="left:0"></div>
<div class="a edge" style="left:1575px"></div>

</body>
</html>
